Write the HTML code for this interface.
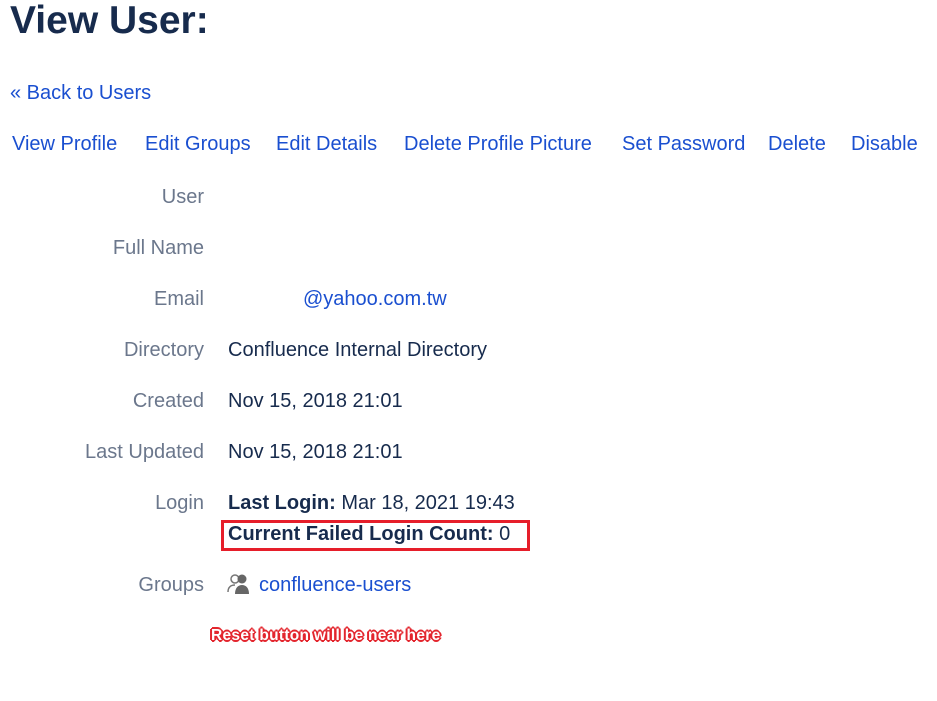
<!DOCTYPE html>
<html><head><style>
body{margin:0;width:937px;height:701px;background:#fff;font-family:"Liberation Sans",sans-serif;color:#172b4d;position:relative;overflow:hidden}
.a{position:absolute;white-space:nowrap;font-size:20px;line-height:24px}
a{color:#1a4fd0;text-decoration:none}
.l{color:#6b778c;right:733px;text-align:right}
h1{position:absolute;left:10px;top:-3px;margin:0;font-size:39px;line-height:48px;font-weight:bold;color:#172b4d}
.box{position:absolute;left:221px;top:520px;width:303px;height:25px;border:3px solid #e61e2a}
.note{position:absolute;left:211px;top:627px;font-size:15.5px;letter-spacing:0.3px;font-weight:bold;color:#fff;white-space:nowrap;text-shadow:-1px -1px 0 #e3262e,1px -1px 0 #e3262e,-1px 1px 0 #e3262e,1px 1px 0 #e3262e,0 2px 0 #e3262e,2px 0 0 #e3262e,-2px 0 0 #e3262e,0 -2px 0 #e3262e}
</style></head><body>
<h1>View User:</h1>
<div class="a" style="left:10px;top:81px"><a>« Back to Users</a></div>
<div class="a" style="left:12px;top:132px"><a>View Profile</a></div>
<div class="a" style="left:145px;top:132px"><a>Edit Groups</a></div>
<div class="a" style="left:276px;top:132px"><a>Edit Details</a></div>
<div class="a" style="left:404px;top:132px"><a>Delete Profile Picture</a></div>
<div class="a" style="left:622px;top:132px"><a>Set Password</a></div>
<div class="a" style="left:768px;top:132px"><a>Delete</a></div>
<div class="a" style="left:851px;top:132px"><a>Disable</a></div>

<div class="a l" style="top:185px">User</div>
<div class="a l" style="top:236px">Full Name</div>
<div class="a l" style="top:287px">Email</div>
<div class="a" style="left:303px;top:287px"><a>@yahoo.com.tw</a></div>
<div class="a l" style="top:338px">Directory</div>
<div class="a" style="left:228px;top:338px">Confluence Internal Directory</div>
<div class="a l" style="top:389px">Created</div>
<div class="a" style="left:228px;top:389px">Nov 15, 2018 21:01</div>
<div class="a l" style="top:440px">Last Updated</div>
<div class="a" style="left:228px;top:440px">Nov 15, 2018 21:01</div>
<div class="a l" style="top:491px">Login</div>
<div class="a" style="left:228px;top:491px"><b>Last Login:</b> Mar 18, 2021 19:43</div>
<div class="a" style="left:228px;top:522px"><b>Current Failed Login Count:</b> 0</div>
<div class="box"></div>
<div class="a l" style="top:573px">Groups</div>
<svg style="position:absolute;left:227px;top:572px" width="24" height="24" viewBox="0 0 24 24">
<circle cx="8" cy="7" r="4" fill="none" stroke="#777" stroke-width="1.5"/>
<path d="M1 20c0-5 3-7 7-7" fill="none" stroke="#777" stroke-width="1.5"/>
<circle cx="15" cy="7" r="4.5" fill="#666"/>
<path d="M8 22c0-6 3-9 7-9s7 3 7 9z" fill="#666"/>
</svg>
<div class="a" style="left:259px;top:573px"><a>confluence-users</a></div>
<div class="note">Reset button will be near here</div>
</body></html>
